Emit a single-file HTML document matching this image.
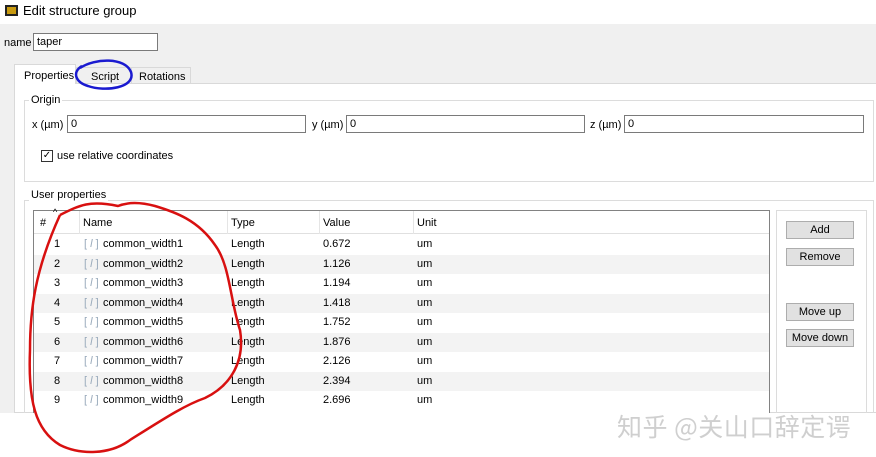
<!DOCTYPE html>
<html><head><meta charset="utf-8"><style>
*{margin:0;padding:0;box-sizing:border-box}
body{width:876px;height:457px;overflow:hidden;background:#fff;font-family:"Liberation Sans",Tahoma,sans-serif;font-size:11px;color:#000;position:relative}
.a{position:absolute}
.inp{position:absolute;background:#fff;border:1px solid #7a7a7a;height:18px;padding:1px 3px;font-size:11px;line-height:14px}
.btn{position:absolute;left:786px;width:68px;height:18px;background:#e1e1e1;border:1px solid #adadad;text-align:center;line-height:16px;font-size:11px}
.row{position:absolute;left:34px;width:735px;height:19.5px;line-height:19.5px}
.row span{position:absolute}
</style></head><body>
<div class="a" style="left:0;top:0;width:876px;height:24px;background:#fff"></div>
<div class="a" style="left:5px;top:5px;width:13px;height:11px;background:#c89a10;border:2px solid #222"></div>
<div class="a" style="left:23px;top:3px;font-size:13px">Edit structure group</div>
<div class="a" style="left:0;top:24px;width:876px;height:389px;background:#f0f0f0"></div>
<div class="a" style="left:4px;top:37px">name</div>
<div class="inp" style="left:33px;top:33px;width:125px">taper</div>
<div class="a" style="left:14px;top:83px;width:864px;height:330px;background:#fff;border:1px solid #d9d9d9"></div>
<div class="a" style="left:14px;top:64px;width:62px;height:20px;background:#fff;border:1px solid #d9d9d9;border-bottom:none;padding:5px 0 0 9px">Properties</div>
<div class="a" style="left:76px;top:67px;width:56px;height:17px;background:#f0f0f0;border:1px solid #d9d9d9;padding:3px 0 0 14px">Script</div>
<div class="a" style="left:131px;top:67px;width:60px;height:17px;background:#f0f0f0;border:1px solid #d9d9d9;padding:3px 0 0 7px">Rotations</div>
<div class="a" style="left:24px;top:100px;width:850px;height:82px;border:1px solid #dcdcdc"></div>
<div class="a" style="left:29px;top:94px;background:#fff;padding:0 2px">Origin</div>
<div class="a" style="left:32px;top:119px">x (µm)</div>
<div class="inp" style="left:67px;top:115px;width:239px">0</div>
<div class="a" style="left:312px;top:119px">y (µm)</div>
<div class="inp" style="left:346px;top:115px;width:239px">0</div>
<div class="a" style="left:590px;top:119px">z (µm)</div>
<div class="inp" style="left:624px;top:115px;width:240px">0</div>
<div class="a" style="left:41px;top:150px;width:12px;height:12px;border:1px solid #333;background:#fff;font-size:10px;line-height:10px;text-align:center">✓</div>
<div class="a" style="left:57px;top:150px">use relative coordinates</div>
<div class="a" style="left:24px;top:200px;width:850px;height:213px;border:1px solid #dcdcdc;border-bottom:none"></div>
<div class="a" style="left:29px;top:189px;background:#fff;padding:0 2px">User properties</div>
<div class="a" style="left:33px;top:210px;width:737px;height:203px;border:1px solid #828282;border-bottom:none;background:#fff"></div>
<div class="a" style="left:34px;top:211px;width:735px;height:23px;border-bottom:1px solid #e0e0e0"></div>
<div class="a" style="left:79px;top:211px;width:1px;height:23px;background:#e5e5e5"></div>
<div class="a" style="left:227px;top:211px;width:1px;height:23px;background:#e5e5e5"></div>
<div class="a" style="left:319px;top:211px;width:1px;height:23px;background:#e5e5e5"></div>
<div class="a" style="left:413px;top:211px;width:1px;height:23px;background:#e5e5e5"></div>
<div class="a" style="left:40px;top:217px">#</div><div class="a" style="left:53px;top:207px;font-size:9px">^</div>
<div class="a" style="left:83px;top:217px">Name</div>
<div class="a" style="left:231px;top:217px">Type</div>
<div class="a" style="left:323px;top:217px">Value</div>
<div class="a" style="left:417px;top:217px">Unit</div>
<div class="row" style="top:235px"><span style="left:20px">1</span><span style="left:50px;color:#9ab">[ <i>l</i> ]</span><span style="left:69px">common_width1</span><span style="left:197px">Length</span><span style="left:289px">0.672</span><span style="left:383px">um</span></div>
<div class="row" style="top:254.5px;background:#f3f3f3"><span style="left:20px">2</span><span style="left:50px;color:#9ab">[ <i>l</i> ]</span><span style="left:69px">common_width2</span><span style="left:197px">Length</span><span style="left:289px">1.126</span><span style="left:383px">um</span></div>
<div class="row" style="top:274px"><span style="left:20px">3</span><span style="left:50px;color:#9ab">[ <i>l</i> ]</span><span style="left:69px">common_width3</span><span style="left:197px">Length</span><span style="left:289px">1.194</span><span style="left:383px">um</span></div>
<div class="row" style="top:293.5px;background:#f3f3f3"><span style="left:20px">4</span><span style="left:50px;color:#9ab">[ <i>l</i> ]</span><span style="left:69px">common_width4</span><span style="left:197px">Length</span><span style="left:289px">1.418</span><span style="left:383px">um</span></div>
<div class="row" style="top:313px"><span style="left:20px">5</span><span style="left:50px;color:#9ab">[ <i>l</i> ]</span><span style="left:69px">common_width5</span><span style="left:197px">Length</span><span style="left:289px">1.752</span><span style="left:383px">um</span></div>
<div class="row" style="top:332.5px;background:#f3f3f3"><span style="left:20px">6</span><span style="left:50px;color:#9ab">[ <i>l</i> ]</span><span style="left:69px">common_width6</span><span style="left:197px">Length</span><span style="left:289px">1.876</span><span style="left:383px">um</span></div>
<div class="row" style="top:352px"><span style="left:20px">7</span><span style="left:50px;color:#9ab">[ <i>l</i> ]</span><span style="left:69px">common_width7</span><span style="left:197px">Length</span><span style="left:289px">2.126</span><span style="left:383px">um</span></div>
<div class="row" style="top:371.5px;background:#f3f3f3"><span style="left:20px">8</span><span style="left:50px;color:#9ab">[ <i>l</i> ]</span><span style="left:69px">common_width8</span><span style="left:197px">Length</span><span style="left:289px">2.394</span><span style="left:383px">um</span></div>
<div class="row" style="top:391px"><span style="left:20px">9</span><span style="left:50px;color:#9ab">[ <i>l</i> ]</span><span style="left:69px">common_width9</span><span style="left:197px">Length</span><span style="left:289px">2.696</span><span style="left:383px">um</span></div>
<div class="a" style="left:776px;top:210px;width:91px;height:203px;border:1px solid #dcdcdc;border-bottom:none"></div>
<div class="btn" style="top:221px">Add</div>
<div class="btn" style="top:248px">Remove</div>
<div class="btn" style="top:303px">Move up</div>
<div class="btn" style="top:329px">Move down</div>
<div class="a" style="left:617px;top:408px;font-size:25px;color:#cfcfcf;font-family:'Noto Sans CJK SC',sans-serif;letter-spacing:0.5px;white-space:nowrap">知乎 @关山口辞定谔</div>
<svg class="a" style="left:0;top:0" width="876" height="457">
<path d="M80,68 C95,58 125,57 131,72 C136,88 105,92 88,86 C75,82 72,72 82,66" fill="none" stroke="#1a1ad0" stroke-width="2.5"/>
<path d="M60,215 C80,205 90,200 118,206 C128,202 140,202 155,206 C175,212 198,220 215,245 C230,265 230,300 240,330 C245,360 232,385 205,398 C185,405 165,418 130,440 C110,455 80,455 60,445 C35,430 28,400 30,350 C30,310 35,270 60,215" fill="none" stroke="#d81010" stroke-width="2.5"/>
</svg>
</body></html>
